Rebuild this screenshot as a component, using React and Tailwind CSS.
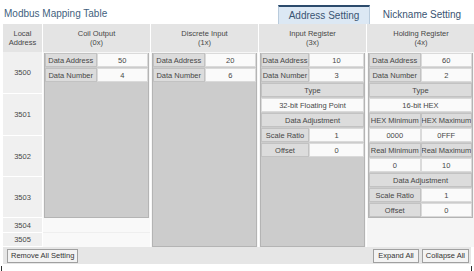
import React from "react";

const Cell = ({ children, label, className = "" }) => (
  <div
    className={`flex items-center justify-center h-[14px] border whitespace-nowrap overflow-hidden ${
      label ? "bg-[#dcdcdc] border-[#c2c2c2]" : "bg-[#fafafa] border-[#dadada]"
    } ${className}`}
  >
    {children}
  </div>
);

const Row2 = ({ a, b, cols = "grid-cols-2", la = true, lb = false }) => (
  <div className={`grid ${cols}`}>
    <Cell label={la}>{a}</Cell>
    <Cell label={lb}>{b}</Cell>
  </div>
);

const Block = ({ children }) => (
  <div className="h-full flex flex-col gap-[1px] bg-[#cccccc] border-x border-b border-[#b4b4b4]">
    {children}
  </div>
);

export default function App() {
  const font = { fontFamily: '"Liberation Sans", Arial, sans-serif' };
  return (
    <div className="w-[474px] h-[271px] bg-white overflow-hidden text-[#474747]" style={font}>
      {/* Top bar */}
      <div className="flex h-[24px] items-end">
        <div className="flex-1 pl-[4px] pb-[5px] text-[10px] leading-none text-[#3f5f7e]">
          Modbus Mapping Table
        </div>
        <div className="flex h-[19px] text-[10px] text-[#3a5472]">
          <div className="w-[92px] flex items-center justify-center bg-[#dce8f4] border-t-2 border-t-[#2c4b6c] border-x border-x-[#b9cbdc]">
            Address Setting
          </div>
          <div className="w-[104px] flex items-center justify-center bg-white">
            Nickname Setting
          </div>
        </div>
      </div>

      <div className="mx-[3px] w-[468px] text-[7.5px] leading-[9px]">
        {/* Header */}
        <div className="grid grid-cols-[39px_107px_107px_107px_108px] gap-x-[1px] bg-white h-[28px]">
          {[
            ["Local", "Address"],
            ["Coil Output", "(0x)"],
            ["Discrete Input", "(1x)"],
            ["Input Register", "(3x)"],
            ["Holding Register", "(4x)"],
          ].map(([a, b]) => (
            <div key={a} className="bg-[#e4e4e4] flex flex-col items-center justify-center text-center">
              <span>{a}</span>
              <span>{b}</span>
            </div>
          ))}
        </div>

        {/* Body */}
        <div className="grid grid-cols-[39px_107px_107px_107px_108px] grid-rows-[42px_42px_41px_41px_15px_14px] bg-white gap-x-[1px]">
          {["3500", "3501", "3502", "3503", "3504", "3505"].map((n, i) => (
            <div
              key={n}
              className="col-start-1 bg-[#f0f0f0] border-b border-white flex items-center justify-center"
              style={{ gridRowStart: i + 1 }}
            >
              {n}
            </div>
          ))}

          {/* Coil Output */}
          <div className="col-start-2 row-start-1 row-end-5 bg-[#f6f6f6] pl-[1px] pr-[1px] pt-[1px]">
            <Block>
              <Row2 a="Data Address" b="50" />
              <Row2 a="Data Number" b="4" />
            </Block>
          </div>
          <div className="col-start-2 row-start-5 bg-[#f9f9f9] border-b border-[#efefef]"></div>
          <div className="col-start-2 row-start-6 bg-[#f9f9f9]"></div>

          {/* Discrete Input */}
          <div className="col-start-3 row-start-1 row-end-7 bg-[#f6f6f6] px-[1px] pt-[1px]">
            <Block>
              <Row2 a="Data Address" b="20" />
              <Row2 a="Data Number" b="6" />
            </Block>
          </div>

          {/* Input Register */}
          <div className="col-start-4 row-start-1 row-end-7 bg-[#f6f6f6] px-[1px] pt-[1px]">
            <Block>
              <Row2 a="Data Address" b="10" cols="grid-cols-[48px_1fr]" />
              <Row2 a="Data Number" b="3" cols="grid-cols-[48px_1fr]" />
              <Cell label>Type</Cell>
              <Cell>32-bit Floating Point</Cell>
              <Cell label>Data Adjustment</Cell>
              <Row2 a="Scale Ratio" b="1" cols="grid-cols-[48px_1fr]" />
              <Row2 a="Offset" b="0" cols="grid-cols-[48px_1fr]" />
            </Block>
          </div>

          {/* Holding Register */}
          <div className="col-start-5 row-start-1 row-end-5 bg-[#f6f6f6] pl-[1px] pr-[2px] pt-[1px]">
            <Block>
              <Row2 a="Data Address" b="60" />
              <Row2 a="Data Number" b="2" />
              <Cell label>Type</Cell>
              <Cell>16-bit HEX</Cell>
              <Row2 a="HEX Minimum" b="HEX Maximum" lb />
              <Row2 a="0000" b="0FFF" la={false} />
              <Row2 a="Real Minimum" b="Real Maximum" lb />
              <Row2 a="0" b="10" la={false} />
              <Cell label>Data Adjustment</Cell>
              <Row2 a="Scale Ratio" b="1" />
              <Row2 a="Offset" b="0" />
            </Block>
          </div>
          <div className="col-start-5 row-start-5 row-end-7 bg-[#f5f5f5]"></div>
        </div>

        {/* Footer */}
        <div className="h-[17px] bg-[#e6e6e6] flex items-center justify-between pl-[4px] pr-[2px]">
          <button className="h-[14px] px-[3px] bg-[#f3f3f3] border border-[#a0a0a0] leading-none text-[#333]">
            Remove All Setting
          </button>
          <div className="flex gap-[3px]">
            <button className="h-[14px] px-[4px] bg-[#f3f3f3] border border-[#a0a0a0] leading-none text-[#333]">
              Expand All
            </button>
            <button className="h-[14px] px-[3px] bg-[#f3f3f3] border border-[#a0a0a0] leading-none text-[#333]">
              Collapse All
            </button>
          </div>
        </div>
      </div>
      <div className="mt-[2px] ml-[1px] w-[471px] h-[6px] border-x border-[#333]"></div>
    </div>
  );
}
